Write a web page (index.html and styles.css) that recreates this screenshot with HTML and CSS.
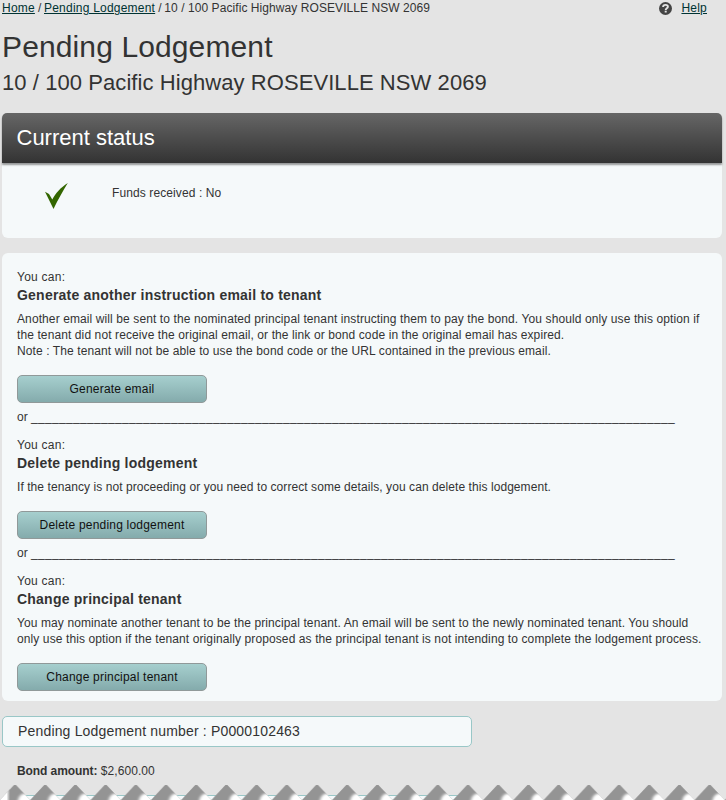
FILE: index.html
```html
<!DOCTYPE html>
<html lang="en">
<head>
    <meta charset="UTF-8">
    <meta name="viewport" content="width=device-width, initial-scale=1.0">
    <title>Pending Lodgement</title>
    <link rel="stylesheet" href="styles.css">
</head>
<body>
    <div class="top-bar">
        <div class="breadcrumb"><a href="#">Home</a> / <a href="#">Pending Lodgement</a> / <span class="current">10 / 100 Pacific Highway ROSEVILLE NSW 2069</span></div>
        <div class="help">
            <svg class="help-icon" width="13" height="13" viewBox="0 0 13 13">
                <circle cx="6.5" cy="6.5" r="6.5" fill="#444"/>
                <path d="M4.1 5.1C4.1 3.500 5.1 2.900 6.5 2.900S8.900 3.600 8.900 4.800C8.900 6.300 6.700 6.200 6.700 7.900" fill="none" stroke="#e4e4e4" stroke-width="1.9"/>
                <rect x="5.700" y="8.700" width="2" height="1.800" fill="#e4e4e4"/>
            </svg>
            <a href="#">Help</a>
        </div>
    </div>

    <h1>Pending Lodgement</h1>
    <h2 class="address">10 / 100 Pacific Highway ROSEVILLE NSW 2069</h2>

    <div class="status-card">
        <h2 class="status-header">Current status</h2>
        <div class="status-body">
            <svg class="tick" width="24" height="27" viewBox="0 0 24 27">
                <path d="M0 8.700L4 11L7.300 16.500C10.500 10.500 15.500 4.500 22.800 0C18 8 13 16.500 8.500 26Z" fill="#360"/>
            </svg>
            <span class="status-text">Funds received : No</span>
        </div>
    </div>

    <div class="options-card">
        <div class="option">
            <p class="lead">You can:</p>
            <h3>Generate another instruction email to tenant</h3>
            <p class="text">Another email will be sent to the nominated principal tenant instructing them to pay the bond. You should only use this option if<br>
                the tenant did not receive the original email, or the link or bond code in the original email has expired.<br>
                Note : The tenant will not be able to use the bond code or the URL contained in the previous email.</p>
            <button class="button">Generate email</button>
            <p class="divider">or <span class="rule">____________________________________________________________________________________________</span></p>
        </div>
        <div class="option">
            <p class="lead">You can:</p>
            <h3>Delete pending lodgement</h3>
            <p class="text short">If the tenancy is not proceeding or you need to correct some details, you can delete this lodgement.</p>
            <button class="button">Delete pending lodgement</button>
            <p class="divider">or <span class="rule">____________________________________________________________________________________________</span></p>
        </div>
        <div class="option">
            <p class="lead">You can:</p>
            <h3>Change principal tenant</h3>
            <p class="text">You may nominate another tenant to be the principal tenant. An email will be sent to the newly nominated tenant. You should<br>
                only use this option if the tenant originally proposed as the principal tenant is not intending to complete the lodgement process.</p>
            <button class="button">Change principal tenant</button>
        </div>
    </div>

    <div class="number-box">Pending Lodgement number : P0000102463</div>
    <p class="bond"><strong>Bond amount:</strong> $2,600.00</p>
    <div class="next-box"></div>

    <svg class="torn-edge" width="726" height="15" viewBox="0 0 726 15">
        <defs>
            <filter id="soft" x="-50%" y="-50%" width="200%" height="200%">
                <feGaussianBlur stdDeviation="1.3"/>
            </filter>
            <clipPath id="tooth-clip">
                <path d="M0 15L14 0H16L30.200 15Z"/>
            </clipPath>
            <pattern id="teeth" width="30.2" height="15" patternUnits="userSpaceOnUse">
                <g clip-path="url(#tooth-clip)">
                    <rect width="31" height="15" fill="#949494"/>
                    <path d="M16.500 20L19 12L22 9L26 8.500L36 9V20Z" fill="#fff" filter="url(#soft)"/>
                </g>
            </pattern>
            <linearGradient id="fade">
                <stop offset="0.65" stop-color="#fff"/>
                <stop offset="1" stop-color="#949494"/>
            </linearGradient>
        </defs>
        <rect width="726" height="15" fill="url(#teeth)"/>
        <path d="M0 15L10 4.300V15Z" fill="url(#fade)"/>
    </svg>
</body>
</html>
```

FILE: styles.css
```css
* {
    margin: 0;
    padding: 0;
    box-sizing: border-box;
}

body {
    width: 726px;
    height: 800px;
    overflow: hidden;
    padding: 0 4px 0 2px;
    position: relative;
    background: #e4e4e4;
    color: #333;
    font-family: "Liberation Sans", Arial, sans-serif;
    font-size: 12px;
    line-height: 16px;
    white-space: nowrap;
}

a {
    color: #033;
    letter-spacing: 0.22px;
    text-decoration: underline;
}

.top-bar {
    display: flex;
    justify-content: space-between;
    height: 29px;
    padding-right: 15px;
}

.breadcrumb {
    letter-spacing: -0.3px;
}

.current {
    letter-spacing: 0.07px;
}

.help {
    display: flex;
    gap: 9px;
}

.help-icon {
    margin-top: 2px;
}

h1 {
    font-size: 30px;
    font-weight: normal;
    letter-spacing: 0.12px;
    line-height: 36px;
}

.address {
    height: 48px;
    font-size: 22px;
    font-weight: normal;
    letter-spacing: 0.07px;
    line-height: 35px;
}

.status-card {
    height: 125px;
    margin-bottom: 15px;
    background: #f5f9fa;
    border-radius: 6px;
}

.status-header {
    height: 50px;
    padding-left: 14.5px;
    background: linear-gradient(#666, #333);
    border-radius: 5px 5px 0 0;
    box-shadow: 0 2px 2px rgba(0, 0, 0, 0.4);
    color: #fff;
    font-size: 22px;
    font-weight: normal;
    line-height: 50px;
}

.status-body {
    display: flex;
    align-items: flex-start;
    padding: 20px 0 0 43px;
}

.status-text {
    margin: 2px 0 0 43px;
    letter-spacing: 0.1px;
}

.options-card {
    height: 448px;
    padding: 16px 15px 0;
    background: #f5f9fa;
    border-radius: 6px;
}

.lead {
    letter-spacing: 0.25px;
}

h3 {
    margin-bottom: 6px;
    font-size: 14px;
    letter-spacing: 0.22px;
    line-height: 20px;
}

.text {
    letter-spacing: 0.103px;
}

.short {
    letter-spacing: 0.07px;
}

.button {
    display: block;
    width: 190px;
    height: 28px;
    margin-top: 16px;
    background: linear-gradient(#a6cfce, #84abac);
    border: 1px solid #909999;
    border-radius: 5px;
    color: #111;
    font: inherit;
    letter-spacing: 0.2px;
}

.divider {
    margin: 6px 0 12px;
}

.rule {
    letter-spacing: 0.326px;
}

.number-box {
    width: 470px;
    height: 31px;
    margin-top: 15px;
    padding-left: 15px;
    background: #f5f9fa;
    border: 1px solid #99c7c7;
    border-radius: 5px;
    font-size: 14px;
    letter-spacing: 0.17px;
    line-height: 29px;
}

.bond {
    margin: 16px 0 16px 15px;
    letter-spacing: 0.08px;
}

.bond strong {
    letter-spacing: -0.08px;
}

.next-box {
    width: 470px;
    height: 31px;
    background: #f5f9fa;
    border: 1px solid #99c7c7;
    border-radius: 5px;
}

.torn-edge {
    position: absolute;
    left: 0;
    bottom: 0;
}
```
